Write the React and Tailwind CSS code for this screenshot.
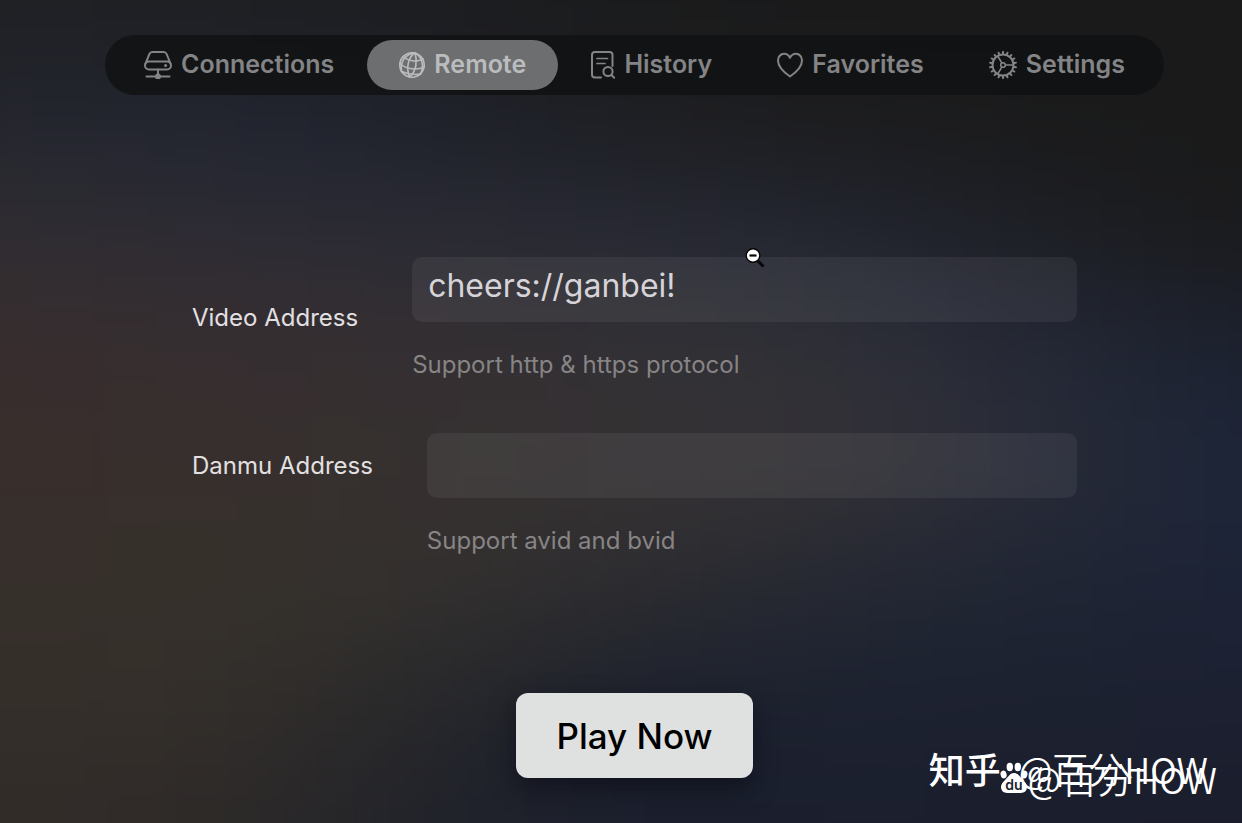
import React from "react";
import { useState } from "react";

// blurred colour mesh, one row per band from top to bottom
const backdrop = [
  ["#1f2023", "#1e1f22", "#1c1d1f", "#1b1b1c", "#1a1a1a", "#1a1a1a", "#1a1a1a"],
  ["#23252e", "#212531", "#1e222d", "#1d1e22", "#1c1c1d", "#1a1a1a", "#1a1a1a"],
  ["#302d32", "#2e2c34", "#2b2b34", "#282a35", "#232633", "#1d1f26", "#1a1a1b"],
  ["#382d2e", "#372e30", "#352f32", "#333134", "#303138", "#252938", "#1b2130"],
  ["#382e2b", "#372f2c", "#36302f", "#363233", "#353236", "#292b37", "#1c2538"],
  ["#36302b", "#36312b", "#34312e", "#2d2c2f", "#242832", "#1f2534", "#1d2336"],
  ["#352f2a", "#342f2a", "#28282a", "#1b202d", "#1c2130", "#1c2130", "#1c2031"],
  ["#322b29", "#2e2a28", "#20222a", "#1b1f2d", "#1b1f2d", "#1b1e2c", "#1b1d2b"],
];

const Backdrop = () => {
  const cells = [];
  for (let y = -2; y < 10; y++) {
    for (let x = -2; x < 9; x++) {
      const row = backdrop[Math.min(7, Math.max(0, y))];
      cells.push(
        <rect
          key={`${x},${y}`}
          x={x - 0.5}
          y={y - 0.5}
          width="1.02"
          height="1.02"
          fill={row[Math.min(6, Math.max(0, x))]}
        />
      );
    }
  }
  return (
    <svg
      className="absolute inset-0 w-full h-full"
      viewBox="0 0 6 7"
      preserveAspectRatio="none"
      aria-hidden="true"
    >
      <filter
        id="soften"
        filterUnits="userSpaceOnUse"
        x="-3"
        y="-3"
        width="12"
        height="13"
        colorInterpolationFilters="sRGB"
      >
        <feGaussianBlur stdDeviation="0.5" />
      </filter>
      <g filter="url(#soften)">{cells}</g>
    </svg>
  );
};

const Icon = ({ viewBox = "0 0 28 28", children }) => (
  <svg
    className="w-auto h-7 shrink-0"
    viewBox={viewBox}
    fill="none"
    stroke="currentColor"
    strokeWidth="2"
    strokeLinecap="round"
    strokeLinejoin="round"
    aria-hidden="true"
  >
    {children}
  </svg>
);

const DriveIcon = () => (
  <Icon>
    <path d="M1.4 12.8 5.4 3Q6.200 1 8.400 1h11.200q2.200 0 3 2l4 9.800" />
    <rect x="1" y="10.500" width="26" height="8" rx="4" />
    <path d="M14 18.500v5M2.500 25.500H11M17 25.500h8.500" />
    <circle cx="14" cy="25.500" r="2" fill="currentColor" />
    <circle cx="21.600" cy="14.600" r="1.500" fill="currentColor" stroke="none" />
  </Icon>
);

const GlobeIcon = () => (
  <Icon viewBox="1 0 26 28">
    <g strokeWidth="1.600">
      <circle cx="14" cy="14" r="12.200" />
      <path d="M17 1.800C10 6 8 17 11.500 26.200M17 1.800C19.500 10 18.500 20 11.500 26.200M17 1.800C7 3 2 11 3.500 20.500M17 1.800c7 4 9.500 12.500 5.500 21.500" />
      <path d="M5 5.500c5 4.500 13.500 6 20 2.500M1.800 12.500c7 6 17.500 7 24.400 3.500M3.500 20.500c6 2.500 13 3.500 19 2.500" />
    </g>
  </Icon>
);

const HistoryIcon = () => (
  <Icon viewBox="1 0 24 28">
    <path d="M11 26.500H5q-3 0-3-3V4q0-3 3-3h14.500q3 0 3 3v11" />
    <path d="M7 7.500h10.500M7 12.500h8" strokeWidth="1.700" />
    <circle cx="18" cy="20.500" r="4.600" />
    <path d="m21.500 24 2.700 2.700" />
  </Icon>
);

const HeartIcon = () => (
  <Icon viewBox="1 0 26 28">
    <path d="M14 25.500C7.500 21 2 15.500 2 9.500c0-3.800 2.600-6.700 6-6.700 2.600 0 4.800 1.500 6 4 1.200-2.500 3.400-4 6-4 3.400 0 6 2.900 6 6.700 0 6-5.500 11.500-12 16Z" />
  </Icon>
);

const SettingsIcon = () => (
  <Icon>
    <circle cx="14" cy="14" r="10.500" />
    <circle cx="14" cy="14" r="2.300" strokeWidth="1.600" />
    <path d="M16.500 14h8M12.800 11.800 8.700 5M12.800 16.200 8.700 23" strokeWidth="1.600" />
    {Array.from({ length: 18 }, (_, i) => (
      <path key={i} d="M14 2.500V.9" transform={`rotate(${i * 20} 14 14)`} />
    ))}
  </Icon>
);

const tabs = [
  { name: "Connections", icon: DriveIcon },
  { name: "Remote", icon: GlobeIcon },
  { name: "History", icon: HistoryIcon },
  { name: "Favorites", icon: HeartIcon },
  { name: "Settings", icon: SettingsIcon },
];

const ZoomCursor = () => (
  <svg className="absolute left-1/2 -top-2.5 w-6 h-6" viewBox="0 0 24 24" aria-hidden="true">
    <path d="m13 14 5.500 5.500" stroke="#050505" strokeWidth="3" />
    <circle cx="8" cy="8.500" r="6.800" fill="#fff" stroke="#050505" strokeWidth="1.400" />
    <path d="M4.500 8.500h7" stroke="#050505" strokeWidth="2.200" />
  </svg>
);

const PawLogo = () => (
  <svg className="w-7 h-8 shrink-0" viewBox="0 0 28 32" fill="#fff" aria-hidden="true">
    <ellipse cx="3.600" cy="12.500" rx="3" ry="4" transform="rotate(-15 3.600 12.500)" />
    <ellipse cx="9.800" cy="5" rx="3.200" ry="4.200" />
    <ellipse cx="17.800" cy="5" rx="3.200" ry="4.200" />
    <ellipse cx="24.400" cy="12.500" rx="3" ry="4" transform="rotate(15 24.400 12.500)" />
    <path d="M14 11c-4 0-5.500 3.500-8.500 6.500C2 21 0 23.500 1.500 27.500c1.500 4 6 3.500 12.500 3.500s11 .5 12.500-3.500c1.500-4-.5-6.500-4-10C19.500 14.500 18 11 14 11Z" />
    <text
      x="14"
      y="28"
      textAnchor="middle"
      fill="#1c1f2e"
      className="font-[Inter,sans-serif] font-semibold text-[14px]"
    >
      du
    </text>
  </svg>
);

const App = () => {
  const [tab, setTab] = useState("Remote");
  const [video, setVideo] = useState("cheers://ganbei!");
  const [danmu, setDanmu] = useState("");

  const submitHandler = (e) => {
    e.preventDefault();
  };

  return (
    <div className="relative min-h-screen overflow-hidden bg-[#1b1f2d] font-[Inter,'Noto_Sans_CJK_SC',sans-serif]">
      <Backdrop />
      <div className="relative flex flex-col items-center pt-[35px] pb-11 pl-[105px] pr-[78px]">
        <nav className="w-full h-[60px] px-[7px] flex items-center justify-between rounded-full bg-[#111213]/85">
          {tabs.map(({ name, icon: TabIcon }) => (
            <button
              key={name}
              type="button"
              onClick={() => setTab(name)}
              className={
                tab === name
                  ? "h-[50px] px-8 flex items-center gap-[9px] rounded-full bg-[#6d6e70] text-[#bbbcbe] text-[25px] font-semibold"
                  : "h-[50px] px-8 flex items-center gap-[9px] rounded-full text-[#848486] text-[25px] font-semibold"
              }
            >
              <TabIcon />
              {name}
            </button>
          ))}
        </nav>

        <form
          onSubmit={submitHandler}
          className="w-full mt-[162px] px-[87px] flex flex-col text-2xl leading-7"
        >
          <div className="flex items-center gap-[54px]">
            <label htmlFor="video" className="shrink-0 leading-7 text-[#e2e0e1]">
              Video Address
            </label>
            <div className="relative grow">
              <input
                id="video"
                type="text"
                className="block w-full h-[65px] px-4 pb-2 rounded-[10px] bg-white/6 text-[32px] text-[#d6d4d8] outline-none"
                value={video}
                onChange={(e) => {
                  setVideo(e.target.value);
                }}
              />
              <p className="mt-[29px] leading-7 text-[#878486]">Support http & https protocol</p>
              <ZoomCursor />
            </div>
          </div>

          <div className="mt-[54px] flex items-start gap-[54px]">
            <label htmlFor="danmu" className="shrink-0 leading-[66px] text-[#e2e0e1]">
              Danmu Address
            </label>
            <div className="grow">
              <input
                id="danmu"
                type="text"
                className="block w-full h-[65px] px-4 pb-2 rounded-[10px] bg-white/6 text-[32px] text-[#d6d4d8] outline-none"
                value={danmu}
                onChange={(e) => {
                  setDanmu(e.target.value);
                }}
              />
              <p className="mt-[29px] leading-7 text-[#878486]">Support avid and bvid</p>
            </div>
          </div>

          <button
            type="submit"
            className="self-center mt-[138px] h-[85px] px-10 rounded-xl bg-[#dfe0e0] text-black text-[35px] font-medium shadow-[0_10px_24px_rgba(10,10,22,0.6)]"
          >
            Play Now
          </button>
        </form>
      </div>

      <div className="absolute right-[34px] bottom-8 flex gap-[18px] text-white text-[36px] leading-[46px] font-['Noto_Sans_CJK_SC',sans-serif] whitespace-nowrap">
        <span className="font-medium">知乎</span>
        <span className="font-[350]">@百分HOW</span>
      </div>
      <div className="absolute right-[25px] bottom-[22px] flex items-center text-white text-[36px] leading-[46px] font-['Noto_Sans_CJK_SC',sans-serif] whitespace-nowrap">
        <PawLogo />
        <span className="font-[350]">@百分HOW</span>
      </div>
    </div>
  );
};

export default App;
